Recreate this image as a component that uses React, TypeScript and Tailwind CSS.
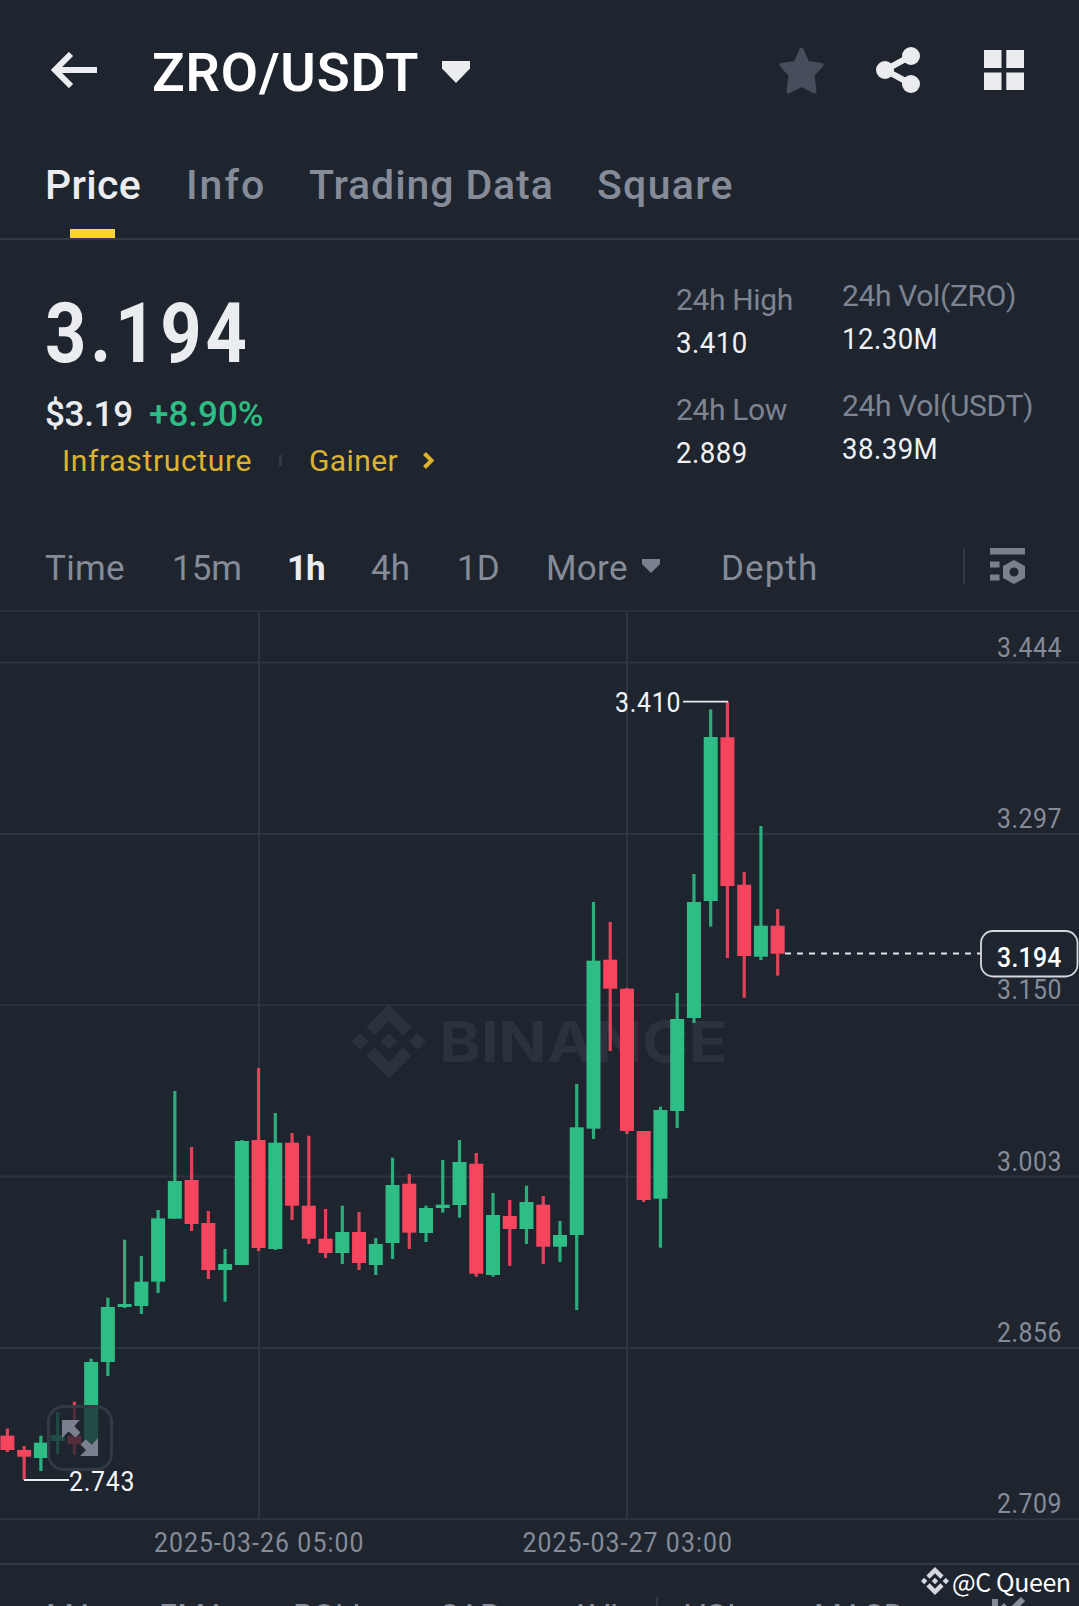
import React from 'react';
import { SiBinance } from 'react-icons/si';

type Candle = [up: 0 | 1, high: number, top: number, bottom: number, low: number];

// Vertical extents are in chart pixels, measured from the top of the screen.
const candles: Candle[] = [
  [0, 1428.5, 1435.7, 1450, 1452], [0, 1446, 1450, 1456.7, 1480], [1, 1435.7, 1442.7, 1458, 1471],
  [1, 1412, 1435, 1441, 1454], [0, 1401.7, 1435.7, 1444, 1455], [1, 1358.7, 1362, 1443, 1443],
  [1, 1297.7, 1307, 1362, 1376], [1, 1239.7, 1304, 1307, 1308], [1, 1256, 1281.7, 1306, 1314],
  [1, 1210, 1218.3, 1281.7, 1293], [1, 1091, 1181, 1218.7, 1218.7], [0, 1147, 1180, 1224, 1231],
  [0, 1211, 1223, 1270, 1279], [1, 1249, 1264, 1270, 1301.7], [1, 1140, 1141, 1265, 1265],
  [0, 1068, 1140, 1248, 1251], [1, 1113, 1142.7, 1249, 1250], [0, 1133, 1142.7, 1205.7, 1220],
  [0, 1135.7, 1205.7, 1238.7, 1244], [0, 1209, 1238.7, 1253, 1258], [1, 1205.7, 1232, 1253, 1264],
  [0, 1212, 1232, 1263, 1270], [1, 1238, 1244, 1265, 1275], [1, 1157.7, 1185, 1243, 1259],
  [0, 1174, 1183.7, 1232.7, 1249], [1, 1205.7, 1208, 1233, 1242], [1, 1160, 1204.7, 1208, 1212.7],
  [1, 1140, 1162, 1205, 1217.7], [0, 1153, 1163.7, 1273.7, 1276.7], [1, 1193, 1215, 1275, 1276.7],
  [0, 1200, 1216, 1229, 1266], [1, 1185.7, 1202, 1229, 1244], [0, 1196, 1204.7, 1246.7, 1264],
  [1, 1221, 1235, 1246.7, 1262], [1, 1084, 1127.3, 1235, 1310], [1, 902, 960.7, 1128.7, 1139],
  [0, 922, 959.7, 988.7, 1051], [0, 988, 988.7, 1131, 1134], [0, 1131, 1131, 1200, 1202],
  [1, 1106.7, 1110, 1198.7, 1247.7], [1, 993, 1019, 1111, 1128], [1, 874, 902, 1018, 1023],
  [1, 709.5, 737, 901, 926.7], [0, 701.7, 737.3, 886, 958], [0, 872, 884.7, 956, 997.7],
  [1, 826, 925.7, 956.7, 960], [0, 909, 925.7, 953.7, 975.7],
];

const priceTicks: [string, number][] = [
  ['3.444', 662.5], ['3.297', 834], ['3.150', 1005.3], ['3.003', 1176.6], ['2.856', 1348], ['2.709', 1519.3],
];

const CONDENSE = 0.92;

function ChartText({ x, y, w, fill, children, weight = 400 }: {
  x: number; y: number; w: number; fill: string; children: string; weight?: number;
}) {
  return (
    <text
      transform={`translate(${x} ${y}) scale(${CONDENSE} 1)`}
      textLength={w / CONDENSE}
      fill={fill}
      fontWeight={weight}
      fontSize="27"
      fontFamily="Roboto, sans-serif"
    >
      {children}
    </text>
  );
}

function Chart() {
  return (
    <svg className="block h-[951px] w-[1079px]" viewBox="0 612 1079 951">
      <g stroke="#2e3541" strokeWidth="2">
        {priceTicks.map(([label, y]) => <path key={label} d={`M0 ${y}H1079`} />)}
        <path d="M259 612V1519M627 612V1519" />
      </g>
      <g fill="#2b323d">
        <g transform="translate(352 1004.5) scale(3.08)">
          <path d="M16.624 13.9202l2.7175 2.7154-7.353 7.353-7.353-7.352 2.7175-2.7164 4.6355 4.6595 4.6356-4.6595zm4.6366-4.6366L24 12l-2.7154 2.7164L18.5682 12l2.6924-2.7164zm-9.272.001l2.7163 2.6914-2.7164 2.7174v-.001L9.2721 12l2.7164-2.7154zm-9.2722-.001L5.4088 12l-2.6914 2.6924L0 12l2.7164-2.7164zM11.9885.0115l7.353 7.329-2.7174 2.7154-4.6356-4.6356-4.6355 4.6595-2.7174-2.7154 7.353-7.353z" />
        </g>
        <text x="439" y="1061.5" textLength="288" lengthAdjust="spacingAndGlyphs" fontSize="56" fontWeight="700" fontFamily="Inter, sans-serif">BINANCE</text>
      </g>
      {candles.map(([up, high, top, bottom, low], i) => {
        const x = 7.4 + 16.745 * i;
        return (
          <g key={i} fill={up ? '#2ebd85' : '#f6465d'}>
            <rect x={x - 1.6} y={high} width="3.200" height={low - high} opacity="0.9" />
            <rect x={x - 7} y={top} width="14" height={bottom - top} />
          </g>
        );
      })}
      <path d="M683 701.7H728M24 1480H69" stroke="#eaecef" strokeWidth="1.8" />
      <ChartText x={615} y={711.5} w={65.5} fill="#f4f5f8">3.410</ChartText>
      <ChartText x={69} y={1491} w={65.5} fill="#f4f5f8">2.743</ChartText>
      {priceTicks.map(([label, y]) => (
        <ChartText key={label} x={997} y={y - 6} w={64.5} fill="#868b98">{label}</ChartText>
      ))}
      <path d="M785 953.5H981" stroke="#e2e4e9" strokeWidth="2" strokeDasharray="6 6" />
      <rect x="981" y="931" width="96.5" height="45.5" rx="12" fill="#1e252f" stroke="#d5d8de" strokeWidth="1.8" />
      <ChartText x={997} y={966.5} w={64.5} fill="#ffffff" weight={500}>3.194</ChartText>
      <ChartText x={154} y={1551.5} w={209.5} fill="#868b98">2025-03-26 05:00</ChartText>
      <ChartText x={522.5} y={1551.5} w={209.5} fill="#868b98">2025-03-27 03:00</ChartText>
    </svg>
  );
}

function Header() {
  return (
    <header className="flex h-[143px] items-center pl-[51px] pr-[55px]">
      <svg className="-mt-1 h-9 w-[46px]" viewBox="0 0 46 36" fill="none" stroke="#eaecef" strokeWidth="6">
        <path d="M46 18H5M20 2L4 18L20 34" />
      </svg>
      <h1 className="ml-[55px] mt-0.5 w-[290px] whitespace-nowrap text-[54px] font-semibold leading-none tracking-[0.9px] text-white">ZRO/USDT</h1>
      <svg className="h-[22px] w-7" viewBox="0 0 28 22" fill="#eaecef"><path d="M0 0H28V7.5L14 22L0 7.5Z" /></svg>
      <div className="ml-auto flex items-center">
        <svg className="-mt-[3px] h-[47px] w-[45px]" viewBox="0 0 45 47" fill="#474d5b" stroke="#474d5b" strokeWidth="4" strokeLinejoin="round">
          <path d="M22.500 2.500L28.500 16L42.500 18L33.500 28L35.500 44.500L22.500 38L9.500 44.500L11.500 28L2.500 18L16.500 16Z" />
        </svg>
        <svg className="-mt-[3px] ml-[52px] h-[46px] w-11" viewBox="0 0 44 46" fill="#eaecef" stroke="#eaecef">
          <path d="M35 9L9 23L35 37" fill="none" strokeWidth="6" />
          <g stroke="none"><circle cx="35" cy="9" r="9" /><circle cx="9" cy="23" r="9" /><circle cx="35" cy="37" r="9" /></g>
        </svg>
        <svg className="-mt-[3px] ml-[64px] h-10 w-10" viewBox="0 0 40 40" fill="#eaecef">
          <path d="M0 0H17.500V18H0ZM22.300 0H40V18H22.300ZM0 22.500H17.500V40H0ZM22.300 22.500H40V40H22.300Z" />
        </svg>
      </div>
    </header>
  );
}

function Tabs() {
  return (
    <nav className="flex h-[97px] whitespace-nowrap border-b-2 border-[#333a46] pl-[45px] text-[41px] font-medium leading-[85px] text-[#868b98]">
      <div className="relative w-[141px] tracking-[0.3px] text-[#eaecef]">
        Price
        <span className="absolute left-[25px] top-[86px] h-[9px] w-[45px] bg-[#fcd535]" />
      </div>
      <div className="w-[123px] tracking-[2px]">Info</div>
      <div className="w-[288px] tracking-[0.9px]">Trading Data</div>
      <div className="tracking-[1.3px]">Square</div>
    </nav>
  );
}

function Stat({ label, value }: { label: string; value: string }) {
  return (
    <div>
      <div className="leading-[43px] tracking-[-0.35px] text-[#7d8390]">{label}</div>
      <div className="origin-left scale-x-[0.92] leading-[43px] tracking-[0.5px] text-[#f0f1f4]">{value}</div>
    </div>
  );
}

function Summary() {
  return (
    <section className="flex h-[285px] whitespace-nowrap pl-[45px]">
      <div className="w-[631px] pt-[51px]">
        <div className="origin-left scale-x-[0.87] text-[83px] font-bold leading-[85px] tracking-[4.4px] text-[#eaecef]">3.194</div>
        <div className="mt-[18px] flex text-[35px] font-medium leading-[41px]">
          <span className="w-[104px] tracking-[-0.3px] text-[#eaecef]">$3.19</span>
          <span className="text-[#2ebd85]">+8.90%</span>
        </div>
        <div className="mt-[7px] flex items-center pl-[17px] text-[30px] leading-[37px] text-[#dcb32f]">
          <span className="w-[217px] tracking-[0.65px]">Infrastructure</span>
          <span className="h-[11px] w-[3px] bg-[#333a46]" />
          <span className="ml-[27px] w-[114px] tracking-[0.4px]">Gainer</span>
          <svg className="h-[17px] w-3" viewBox="0 0 12 17" fill="none" stroke="#dcb32f" strokeWidth="4"><path d="M1.500 1.500L8.500 8.500L1.500 15.500" /></svg>
        </div>
      </div>
      <div className="flex w-[166px] flex-col gap-6 pt-[38px] text-[30px]">
        <Stat label="24h High" value="3.410" />
        <Stat label="24h Low" value="2.889" />
      </div>
      <div className="flex flex-col gap-6 pt-[34px] text-[30px]">
        <Stat label="24h Vol(ZRO)" value="12.30M" />
        <Stat label="24h Vol(USDT)" value="38.39M" />
      </div>
    </section>
  );
}

function Intervals() {
  return (
    <nav className="flex h-[87px] items-center whitespace-nowrap border-b-2 border-[#2a313b] pl-[45px] text-[35px] leading-[85px] text-[#868b98]">
      <span className="mt-0.5 w-[127px] tracking-[0.3px]">Time</span>
      <span className="mt-0.5 w-[115px]">15m</span>
      <span className="mt-0.5 w-[84px] font-bold tracking-[-1px] text-[#eaecef]">1h</span>
      <span className="mt-0.5 w-[86px]">4h</span>
      <span className="mt-0.5 w-[89px]">1D</span>
      <span className="mt-0.5 w-[96px] tracking-[0.3px]">More</span>
      <svg className="-mt-1 h-[14px] w-[18px]" viewBox="0 0 18 14" fill="#7b808e"><path d="M0 0H18V5L9 14L0 5Z" /></svg>
      <span className="ml-[61px] mt-0.5 w-[242px] tracking-[1.1px]">Depth</span>
      <span className="-mt-1 h-9 w-0.5 bg-[#333a46]" />
      <svg className="-mt-1 ml-[25px] h-9 w-[35px]" viewBox="0 0 35 36" fill="#7b808e">
        <path d="M0 0H35V6.500H0ZM0 13.500H9.500V19.500H0ZM0 26.500H9.500V32.500H0Z" />
        <path fillRule="evenodd" d="M24 12L35 18V30L24 36L13 30V18ZM24 19.500a4.500 4.500 0 1 0 0 9a4.500 4.500 0 1 0 0-9Z" />
      </svg>
    </nav>
  );
}

function Indicators() {
  return (
    <div className="flex h-[102px] items-center whitespace-nowrap border-t-2 border-[#333a46] pl-[46px] text-[32px] leading-none text-[#868b98]">
      <span className="w-[113px]">MA</span>
      <span className="w-[134px]">EMA</span>
      <span className="w-[147px]">BOLL</span>
      <span className="w-[130px]">SAR</span>
      <span className="w-[86px]">AVL</span>
      <span className="h-9 w-0.5 bg-[#333a46]" />
      <span className="ml-[27px] w-[129px]">VOL</span>
      <span className="w-[177px]">MACD</span>
      <svg className="h-9 w-9" viewBox="0 0 36 36" fill="none" stroke="#868b98" strokeWidth="6">
        <path d="M4 2V34H34M11 8L18 16L32 2" />
      </svg>
    </div>
  );
}

export default function App() {
  return (
    <main className="relative h-[1606px] w-[1079px] overflow-hidden bg-[#1e252f] font-[Roboto,sans-serif]">
      <Header />
      <Tabs />
      <Summary />
      <Intervals />
      <div className="relative">
        <Chart />
        <button className="absolute left-[47px] top-[793px] flex h-[66px] w-[66px] items-center justify-center rounded-[17px] border-[3px] border-[#333a45] bg-[#1e252f]/75">
          <svg className="h-9 w-9" viewBox="0 0 36 36" fill="#7b808e">
            <path d="M0 0H18L12 6L18.500 12.500L13.500 17.500L6.500 11.500L0 18ZM36 36H18L24 30L18.500 24.500L23.500 19.500L30 24.500L36 18Z" />
          </svg>
        </button>
      </div>
      <Indicators />
      <div className="absolute left-[921px] top-[1566px] flex items-center">
        <SiBinance className="h-7 w-7 text-[#d5d8e0]" />
        <span className="ml-[3px] whitespace-nowrap font-['Noto_Sans_CJK_SC',sans-serif] text-[25px] leading-[30px] tracking-[-0.4px] text-white">@C Queen</span>
      </div>
    </main>
  );
}
